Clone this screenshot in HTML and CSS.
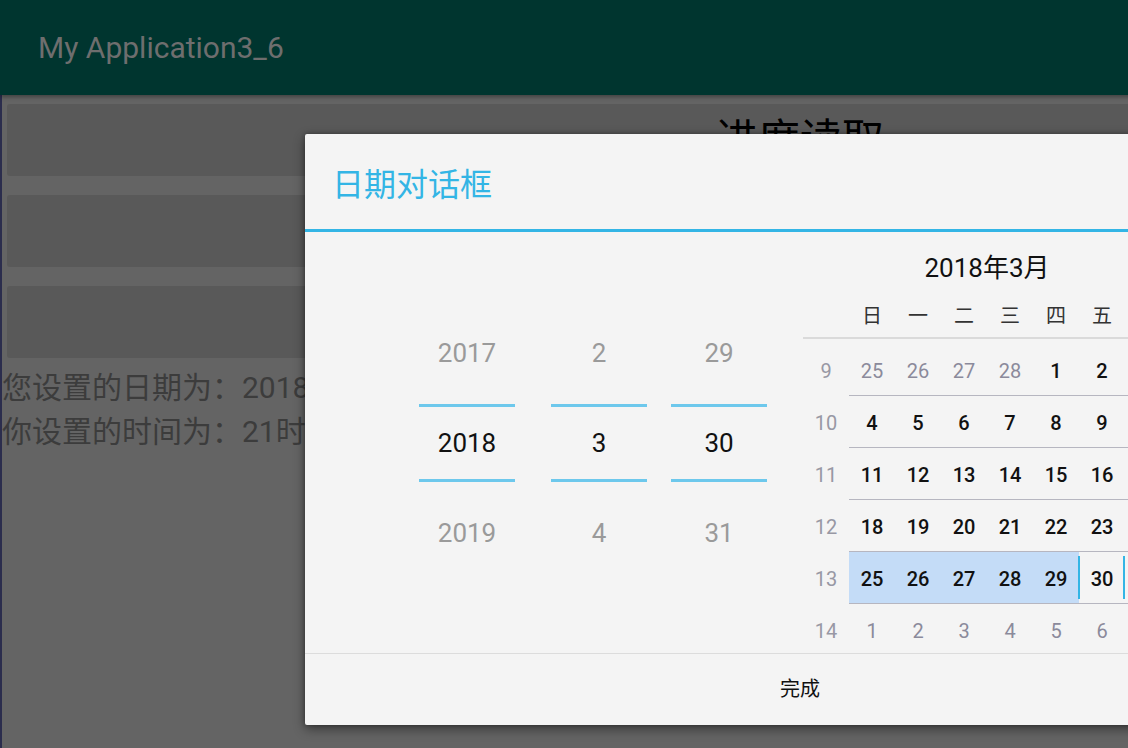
FILE: index.html
```html
<!DOCTYPE html>
<html lang="zh">
<head>
  <meta charset="UTF-8">
  <title>My Application3_6</title>
  <link rel="stylesheet" href="styles.css">
</head>
<body>
  <div class="screen">
    <div class="appbar"><h1>My Application3_6</h1></div>

    <div class="content">
      <div class="btn">进度读取</div>
      <div class="btn"></div>
      <div class="btn"></div>
      <p class="info">您设置的日期为：2018年3月30日</p>
      <p class="info">你设置的时间为：21时30分</p>
    </div>

    <div class="dialog">
      <div class="dlg-title">日期对话框</div>
      <div class="dlg-body">
        <div class="spinners">
          <div class="col">
            <div class="val">2017</div>
            <div class="val cur">2018</div>
            <div class="val">2019</div>
          </div>
          <div class="col col-month">
            <div class="val">2</div>
            <div class="val cur">3</div>
            <div class="val">4</div>
          </div>
          <div class="col col-day">
            <div class="val">29</div>
            <div class="val cur">30</div>
            <div class="val">31</div>
          </div>
        </div>

        <div class="calendar">
          <div class="cal-month">2018年3月</div>
          <div class="cal-head">
            <span></span><span>日</span><span>一</span><span>二</span><span>三</span><span>四</span><span>五</span><span>六</span>
          </div>
          <div class="cal-rows">
            <div class="week">
              <span class="wk">9</span>
              <div class="days"><span class="off">25</span><span class="off">26</span><span class="off">27</span><span class="off">28</span><span>1</span><span>2</span><span>3</span></div>
            </div>
            <div class="week">
              <span class="wk">10</span>
              <div class="days"><span>4</span><span>5</span><span>6</span><span>7</span><span>8</span><span>9</span><span>10</span></div>
            </div>
            <div class="week">
              <span class="wk">11</span>
              <div class="days"><span>11</span><span>12</span><span>13</span><span>14</span><span>15</span><span>16</span><span>17</span></div>
            </div>
            <div class="week">
              <span class="wk">12</span>
              <div class="days"><span>18</span><span>19</span><span>20</span><span>21</span><span>22</span><span>23</span><span>24</span></div>
            </div>
            <div class="week">
              <span class="wk">13</span>
              <div class="days selweek"><span>25</span><span>26</span><span>27</span><span>28</span><span>29</span><span class="picked">30</span><span>31</span></div>
            </div>
            <div class="week">
              <span class="wk">14</span>
              <div class="days"><span class="off">1</span><span class="off">2</span><span class="off">3</span><span class="off">4</span><span class="off">5</span><span class="off">6</span><span class="off">7</span></div>
            </div>
          </div>
        </div>
      </div>
      <div class="dlg-foot">完成</div>
    </div>
  </div>
</body>
</html>
```

FILE: styles.css
```css
* {
  box-sizing: border-box;
}
html, body {
  margin: 0;
  height: 100%;
}
body {
  overflow: hidden;
  background-color: #646464;
  font-family: Roboto, "Noto Sans CJK SC", sans-serif;
}
.screen {
  position: relative;
  width: 1600px;
  height: 748px;
}

/* app bar (dimmed behind the dialog) */
.appbar {
  position: relative;
  height: 95px;
  padding-left: 38px;
  display: flex;
  align-items: center;
  background-color: #00352f;
  box-shadow: 0 2px 4px rgba(0, 0, 0, 0.35);
}
.appbar h1 {
  margin: 0;
  font-size: 30px;
  font-weight: 400;
  color: #6e6e6e;
}

.content {
  height: 653px;
  padding: 9px 7px 0 5px;
  border-left: 2px solid #2b2d4d;
}
.btn {
  height: 72px;
  border-radius: 3px;
  background-color: #595959;
  color: #000;
  font-size: 42px;
  line-height: 72px;
  text-align: center;
}
.btn + .btn {
  margin-top: 19px;
}
.info {
  margin: 0 0 0 -5px;
  font-size: 30px;
  line-height: 44px;
  color: #3c3c3c;
}
.btn + .info {
  margin-top: 8px;
}

/* dialog */
.dialog {
  position: absolute;
  left: 305px;
  top: 134px;
  width: 990px;
  height: 591px;
  background-color: #f4f4f4;
  border-radius: 2px;
  box-shadow: 0 4px 12px rgba(0, 0, 0, 0.45), 0 0 4px rgba(0, 0, 0, 0.3);
}
.dlg-title {
  height: 98px;
  padding-left: 27px;
  display: flex;
  align-items: center;
  border-bottom: 3px solid #33b5e5;
  font-size: 32px;
  color: #33b5e5;
}
.dlg-body {
  height: 421px;
  display: flex;
  overflow: hidden;
}
.dlg-foot {
  height: 72px;
  border-top: 1px solid #dcdcdc;
  line-height: 71px;
  text-align: center;
  font-size: 20px;
  color: #111;
}

/* spinners */
.spinners {
  display: flex;
  margin-left: 114px;
  padding-top: 76px;
}
.col {
  width: 96px;
}
.col-month {
  margin-left: 36px;
}
.col-day {
  margin-left: 24px;
}
.val {
  height: 90px;
  line-height: 90px;
  text-align: center;
  font-size: 26px;
  color: #9a9a9a;
}
.val.cur {
  height: 78px;
  margin: 6px 0;
  line-height: 72px;
  border-top: 3px solid #6dc8ec;
  border-bottom: 3px solid #6dc8ec;
  color: #111;
}

/* calendar */
.calendar {
  width: 368px;
  margin-left: 36px;
}
.cal-month {
  padding-top: 16px;
  line-height: 40px;
  text-align: center;
  font-size: 26px;
  color: #111;
}
.cal-head {
  display: flex;
  height: 51px;
  padding-top: 8px;
  border-bottom: 2px solid #dadada;
}
.cal-head span {
  width: 46px;
  line-height: 40px;
  text-align: center;
  font-size: 20px;
  color: #333;
}
.cal-rows {
  padding-top: 5px;
}
.week {
  display: flex;
  height: 52px;
}
.wk {
  width: 46px;
  line-height: 55px;
  text-align: center;
  font-size: 20px;
  color: #9898a4;
}
.days {
  display: flex;
  width: 322px;
  border-bottom: 1px solid #b6b6c0;
}
.days span {
  position: relative;
  width: 46px;
  line-height: 55px;
  text-align: center;
  font-size: 20px;
  font-weight: 500;
  color: #111;
}
.days .off {
  font-weight: 400;
  color: #8b8a9b;
}
.selweek span {
  background-color: #c4dcf7;
}
.selweek .picked,
.selweek .picked ~ span {
  background-color: transparent;
}
.picked::after {
  content: "";
  position: absolute;
  left: -1px;
  right: 0;
  top: 4px;
  bottom: 4px;
  border-left: 2px solid #33b5e5;
  border-right: 2px solid #33b5e5;
}
```
